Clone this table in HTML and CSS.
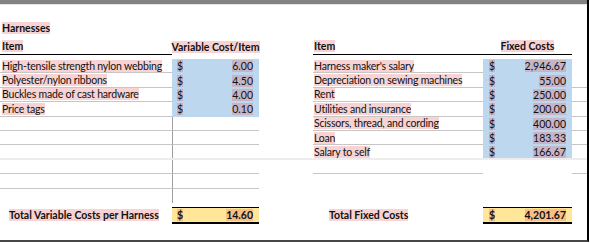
FILE: index.html
```html
<!DOCTYPE html>
<html>
<head>
<meta charset="utf-8">
<link rel="stylesheet" href="styles.css">
</head>
<body>
<div class="sheet">
  <div class="topbar"></div>
  <div class="row r-blank"></div>
  <div class="row r-title"><div class="c a"><span class="hl b">Harnesses</span></div></div>
  <div class="row r-head">
    <div class="c a ul"><span class="hl b">Item</span></div>
    <div class="c center"><span class="hl b">Variable Cost/Item</span></div>
    <div class="c"></div>
    <div class="c d ul"><span class="hl b">Item</span></div>
    <div class="c ul center"><span class="hl b">Fixed Costs</span></div>
    <div class="c"></div>
  </div>
  <div class="row r-gap"></div>

  <div class="row r-data">
    <div class="c a ln"><span class="hl">High-tensile strength nylon webbing</span></div>
    <div class="c val blue"><span class="hl">$</span><span class="hl">6.00</span></div>
    <div class="c"></div>
    <div class="c d ln"><span class="hl">Harness maker's salary</span></div>
    <div class="c val vr blue"><span class="hl">$</span><span class="hl">2,946.67</span></div>
    <div class="c"></div>
  </div>
  <div class="row r-data">
    <div class="c a ln"><span class="hl">Polyester/nylon ribbons</span></div>
    <div class="c val blue"><span class="hl">$</span><span class="hl">4.50</span></div>
    <div class="c"></div>
    <div class="c d ln"><span class="hl">Depreciation on sewing machines</span></div>
    <div class="c val vr blue"><span class="hl">$</span><span class="hl">55.00</span></div>
    <div class="c ln"></div>
  </div>
  <div class="row r-data">
    <div class="c a ln"><span class="hl">Buckles made of cast hardware</span></div>
    <div class="c val blue"><span class="hl">$</span><span class="hl">4.00</span></div>
    <div class="c"></div>
    <div class="c d ln"><span class="hl">Rent</span></div>
    <div class="c val vr blue"><span class="hl">$</span><span class="hl">250.00</span></div>
    <div class="c ln"></div>
  </div>
  <div class="row r-data">
    <div class="c a ln"><span class="hl">Price tags</span></div>
    <div class="c val blue"><span class="hl">$</span><span class="hl">0.10</span></div>
    <div class="c"></div>
    <div class="c d ln"><span class="hl">Utilities and insurance</span></div>
    <div class="c val vr blue"><span class="hl">$</span><span class="hl">200.00</span></div>
    <div class="c ln"></div>
  </div>
  <div class="row r-data">
    <div class="c a ln"></div>
    <div class="c ln vl"></div>
    <div class="c"></div>
    <div class="c d ln"><span class="hl">Scissors, thread, and cording</span></div>
    <div class="c val vr blue"><span class="hl">$</span><span class="hl">400.00</span></div>
    <div class="c ln"></div>
  </div>
  <div class="row r-data">
    <div class="c a ln"></div>
    <div class="c ln vl"></div>
    <div class="c"></div>
    <div class="c d ln"><span class="hl">Loan</span></div>
    <div class="c val vr blue"><span class="hl">$</span><span class="hl">183.33</span></div>
    <div class="c ln"></div>
  </div>
  <div class="row r-data faint">
    <div class="c a"></div>
    <div class="c vl"></div>
    <div class="c"></div>
    <div class="c d"><span class="hl">Salary to self</span></div>
    <div class="c val vr blue"><span class="hl">$</span><span class="hl">166.67</span></div>
    <div class="c"></div>
  </div>
  <div class="row r-data">
    <div class="c a ln"></div>
    <div class="c ln vl"></div>
    <div class="c"></div>
    <div class="c d ln"></div>
    <div class="c"></div>
    <div class="c ln"></div>
  </div>
  <div class="row r-data">
    <div class="c a ln"></div>
    <div class="c ln vl"></div>
    <div class="c"></div>
    <div class="c"></div>
    <div class="c"></div>
    <div class="c"></div>
  </div>
  <div class="row r-data">
    <div class="c a"></div>
    <div class="c vl"></div>
    <div class="c"></div>
    <div class="c"></div>
    <div class="c"></div>
    <div class="c"></div>
  </div>

  <div class="row r-total">
    <div class="c tl-left"><span class="hl b">Total Variable Costs per Harness</span></div>
    <div class="c val total"><span class="hl b">$</span><span class="hl b">14.60</span></div>
    <div class="c"></div>
    <div class="c tl-right"><span class="hl b">Total Fixed Costs</span></div>
    <div class="c val vr total"><span class="hl b">$</span><span class="hl b">4,201.67</span></div>
    <div class="c"></div>
  </div>
</div>
</body>
</html>
```

FILE: styles.css
```css
html, body {
  margin: 0;
  padding: 0;
  background: #ffffff;
}

body {
  font-family: Lato, "Liberation Sans", sans-serif;
  font-size: 10.5px;
  color: #111111;
}

.sheet {
  width: 587px;
  height: 240px;
  border-right: 2px solid #000000;
  border-bottom: 2px solid #474747;
  overflow: hidden;
}

.topbar {
  height: 4px;
  background: #838383;
  border-bottom: 1px solid #e4e4e4;
}

.row {
  display: grid;
  grid-template-columns: 172px 87px 54px 170px 89px 15px;
  box-sizing: border-box;
}

.r-blank { height: 13px; }
.r-title { height: 19px; }
.r-head { height: 18px; }
.r-gap { height: 4px; }
.r-data { height: 14.4px; }
.r-total { height: 21px; }

.faint {
  border-bottom: 2px solid #ededed;
}

.c {
  box-sizing: border-box;
  display: flex;
  align-items: center;
  white-space: nowrap;
  min-width: 0;
}

.a { padding-left: 2px; }
.d { padding-left: 1px; }

.r-data .a, .r-data .d { letter-spacing: -0.2px; }

.r-title .a { align-items: center; padding-top: 1px; }
.r-head .c { align-items: flex-end; padding-bottom: 2px; }

.center { justify-content: center; }

.ul { border-bottom: 1px solid #000000; }
.ln { border-bottom: 1px solid #c6c6c6; }
.vl { border-left: 1px solid #a0a0a0; }

.blue { background: #bdd7ee; }

.val {
  justify-content: space-between;
  padding: 0 6px 0 5px;
}
.vr { padding: 0 6px 0 6px; }

.hl {
  background: rgba(222, 80, 80, 0.25);
}

.b { font-weight: 700; }

.tl-left { padding-left: 9px; padding-top: 4px; }
.tl-right { padding-left: 16px; padding-top: 4px; }

.total {
  margin-top: 4px;
  height: 17px;
  background: #ffe699;
  border-top: 1px solid #000000;
  border-bottom: 2px solid #000000;
}
```
